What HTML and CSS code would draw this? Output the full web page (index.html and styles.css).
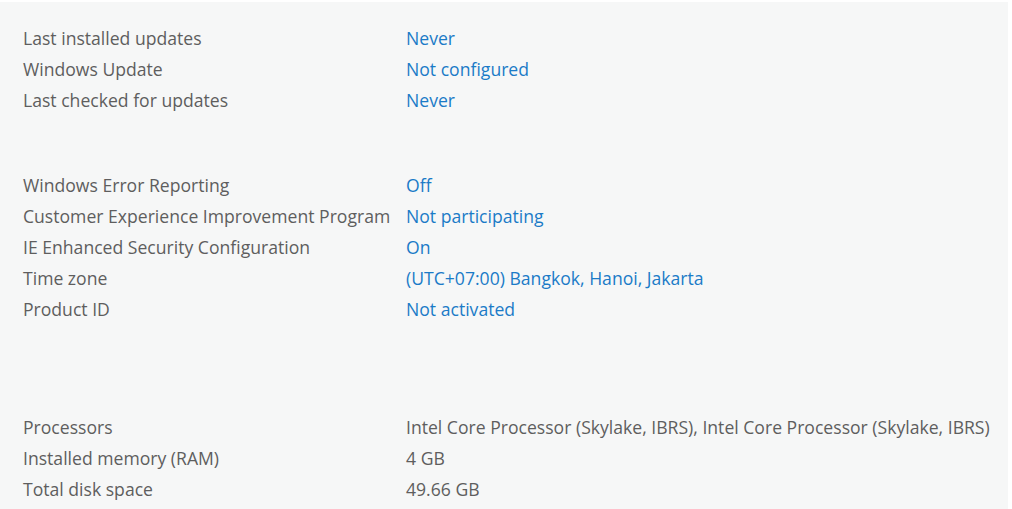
FILE: index.html
```html
<!DOCTYPE html>
<html lang="en">
<head>
  <meta charset="UTF-8">
  <title>Server Properties</title>
  <link rel="stylesheet" href="styles.css">
</head>
<body>
  <div class="panel">
    <!-- updates -->
    <div class="group">
      <div class="label">Last installed updates</div>
      <div class="value link">Never</div>
      <div class="label">Windows Update</div>
      <div class="value link">Not configured</div>
      <div class="label">Last checked for updates</div>
      <div class="value link">Never</div>
    </div>

    <!-- settings -->
    <div class="group">
      <div class="label">Windows Error Reporting</div>
      <div class="value link">Off</div>
      <div class="label">Customer Experience Improvement Program</div>
      <div class="value link">Not participating</div>
      <div class="label">IE Enhanced Security Configuration</div>
      <div class="value link">On</div>
      <div class="label">Time zone</div>
      <div class="value link">(UTC+07:00) Bangkok, Hanoi, Jakarta</div>
      <div class="label">Product ID</div>
      <div class="value link">Not activated</div>
    </div>

    <!-- hardware -->
    <div class="group hw">
      <div class="label">Processors</div>
      <div class="value">Intel Core Processor (Skylake, IBRS), Intel Core Processor (Skylake, IBRS)</div>
      <div class="label">Installed memory (RAM)</div>
      <div class="value">4 GB</div>
      <div class="label">Total disk space</div>
      <div class="value">49.66 GB</div>
    </div>
  </div>
</body>
</html>
```

FILE: styles.css
```css
/* page */
body {
  margin: 0;
  padding: 0;
  background-color: #ffffff;
  font-family: "Open Sans", "Noto Sans", sans-serif;
  font-size: 17.6px;
}

.panel {
  margin: 2px 4px 0 0;
  height: 507px;
  background-color: #f6f7f7;
  padding: 21px 0 0 23px;
  box-sizing: border-box;
  overflow: hidden;
}

/* label / value rows */
.group {
  display: grid;
  grid-template-columns: 383px 1fr;
  line-height: 30.8px;
  margin-bottom: 55px;
}

.group.hw {
  margin-top: 88px;
  margin-bottom: 0;
}

.label {
  color: #5e5e5e;
  white-space: nowrap;
}

.value {
  color: #5e5e5e;
  white-space: nowrap;
}

.value.link {
  color: #1b7bc7;
}
```
